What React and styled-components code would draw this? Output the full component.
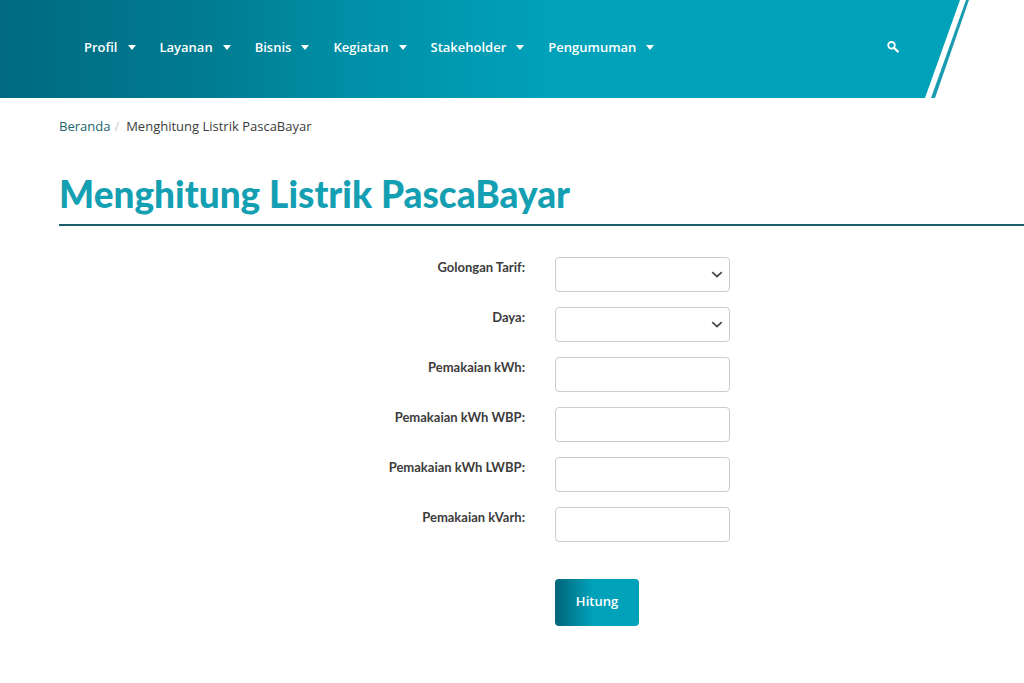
import React from "react";
import styled, { createGlobalStyle } from "styled-components";

const colors = {
  deep: "#006a80",
  teal: "#00a2ba",
  title: "#159fb3",
  rule: "#1f5f6b",
  link: "#1b6470",
  text: "#3c3c3c",
  border: "#cccccc",
};

const GlobalStyle = createGlobalStyle`
  *, *::before, *::after { box-sizing: border-box; }
  body {
    margin: 0;
    background: #ffffff;
    color: ${colors.text};
    font-family: "Open Sans", "Noto Sans", sans-serif;
    font-size: 13px;
    line-height: 20px;
  }
`;

const Header = styled.header`
  display: flex;
  height: 98px;
  padding-right: 55px;
`;

const HeaderBar = styled.div`
  flex: 1;
  display: flex;
  align-items: center;
  justify-content: space-between;
  padding: 0 61px 4px 84px;
  background: linear-gradient(90deg, ${colors.deep} 0, #007c92 22%, #008fa6 36%, ${colors.teal} 58%);
  clip-path: polygon(0 0, 100% 0, calc(100% - 35px) 100%, 0 100%);
`;

const HeaderStripe = styled.div`
  width: 38px;
  margin-left: -29px;
  background: #1a9bb0;
  clip-path: polygon(35px 0, 100% 0, 4px 100%, 0 100%);
`;

const Menu = styled.ul`
  display: flex;
  gap: 24px;
  margin: 0;
  padding: 0;
  list-style: none;
`;

const MenuLink = styled.a`
  display: flex;
  align-items: center;
  gap: 10px;
  color: #ffffff;
  font-weight: 600;
  text-decoration: none;
`;

const Caret = styled.span`
  border: 4px solid transparent;
  border-top: 5px solid #ffffff;
  border-bottom: 0;
`;

const SearchButton = styled.button`
  display: flex;
  padding: 0;
  border: 0;
  background: none;
  color: #ffffff;
  cursor: pointer;
`;

const Main = styled.main`
  padding: 18px 0 40px 59px;
`;

const Breadcrumb = styled.ol`
  display: flex;
  margin: 0;
  padding: 0;
  list-style: none;
`;

const Crumb = styled.li`
  & + &::before {
    content: "/";
    padding: 0 7px 0 4px;
    color: #cccccc;
  }
`;

const CrumbLink = styled.a`
  color: ${colors.link};
  text-decoration: none;
`;

const Title = styled.h1`
  margin: 35px 0 31px;
  padding-bottom: 7px;
  border-bottom: 2px solid ${colors.rule};
  color: ${colors.title};
  font-family: Lato, "Open Sans", sans-serif;
  font-size: 37px;
  font-weight: 900;
  line-height: 46px;
`;

const Form = styled.form`
  display: flex;
  flex-direction: column;
  gap: 15px;
`;

const Row = styled.div`
  display: grid;
  grid-template-columns: minmax(0, 466fr) minmax(0, 469fr);
  column-gap: 30px;
`;

const Label = styled.label`
  font-family: Lato, "Open Sans", sans-serif;
  font-weight: 700;
  text-align: right;
`;

const FieldBox = styled.div`
  position: relative;
  display: flex;
  width: 175px;
  height: 35px;
`;

const Input = styled.input`
  width: 100%;
  padding: 6px 12px;
  border: 1px solid ${colors.border};
  border-radius: 4px;
  background: #ffffff;
  color: inherit;
  font: inherit;
`;

const Select = styled(Input)`
  appearance: none;
`;

const Chevron = styled.svg`
  position: absolute;
  right: 7px;
  top: 13px;
  pointer-events: none;
`;

const SubmitButton = styled.button`
  grid-column: 2;
  justify-self: start;
  width: 84px;
  height: 47px;
  margin-top: 22px;
  padding: 0 0 3px;
  border: 0;
  border-radius: 4px;
  background: linear-gradient(90deg, #006478 0, ${colors.teal} 45%);
  color: #ffffff;
  font: inherit;
  font-weight: 600;
  cursor: pointer;
`;

const menu = ["Profil", "Layanan", "Bisnis", "Kegiatan", "Stakeholder", "Pengumuman"];

const fields = [
  { id: "tarif", label: "Golongan Tarif:", select: true },
  { id: "daya", label: "Daya:", select: true },
  { id: "kwh", label: "Pemakaian kWh:" },
  { id: "wbp", label: "Pemakaian kWh WBP:" },
  { id: "lwbp", label: "Pemakaian kWh LWBP:" },
  { id: "kvarh", label: "Pemakaian kVarh:" },
];

function Field({ id, label, select }) {
  return (
    <Row>
      <Label htmlFor={id}>{label}</Label>
      <FieldBox>
        {select ? (
          <>
            <Select as="select" id={id} defaultValue="">
              <option value="" />
            </Select>
            <Chevron width="12" height="9" viewBox="0 0 12 9" fill="none" aria-hidden="true">
              <path d="M1.2 2.2L6 6.5L10.8 2.2" stroke="#4a4a4a" strokeWidth="1.7" />
            </Chevron>
          </>
        ) : (
          <Input type="text" id={id} />
        )}
      </FieldBox>
    </Row>
  );
}

export default function App() {
  return (
    <>
      <GlobalStyle />
      <Header>
        <HeaderBar>
          <nav>
            <Menu>
              {menu.map((item) => (
                <li key={item}>
                  <MenuLink href="#">
                    {item}
                    <Caret />
                  </MenuLink>
                </li>
              ))}
            </Menu>
          </nav>
          <SearchButton type="button" aria-label="Cari">
            <svg width="12" height="12" viewBox="0 0 12 12" fill="none" aria-hidden="true">
              <circle cx="4.5" cy="4.3" r="3.3" stroke="currentColor" strokeWidth="1.8" />
              <path d="M7.2 7L10.7 10.4" stroke="currentColor" strokeWidth="2.4" strokeLinecap="round" />
            </svg>
          </SearchButton>
        </HeaderBar>
        <HeaderStripe />
      </Header>
      <Main>
        <nav aria-label="Breadcrumb">
          <Breadcrumb>
            <Crumb>
              <CrumbLink href="#">Beranda</CrumbLink>
            </Crumb>
            <Crumb aria-current="page">Menghitung Listrik PascaBayar</Crumb>
          </Breadcrumb>
        </nav>
        <Title>Menghitung Listrik PascaBayar</Title>
        <Form onSubmit={(event) => event.preventDefault()}>
          {fields.map((field) => (
            <Field key={field.id} {...field} />
          ))}
          <Row>
            <SubmitButton type="submit">Hitung</SubmitButton>
          </Row>
        </Form>
      </Main>
    </>
  );
}
